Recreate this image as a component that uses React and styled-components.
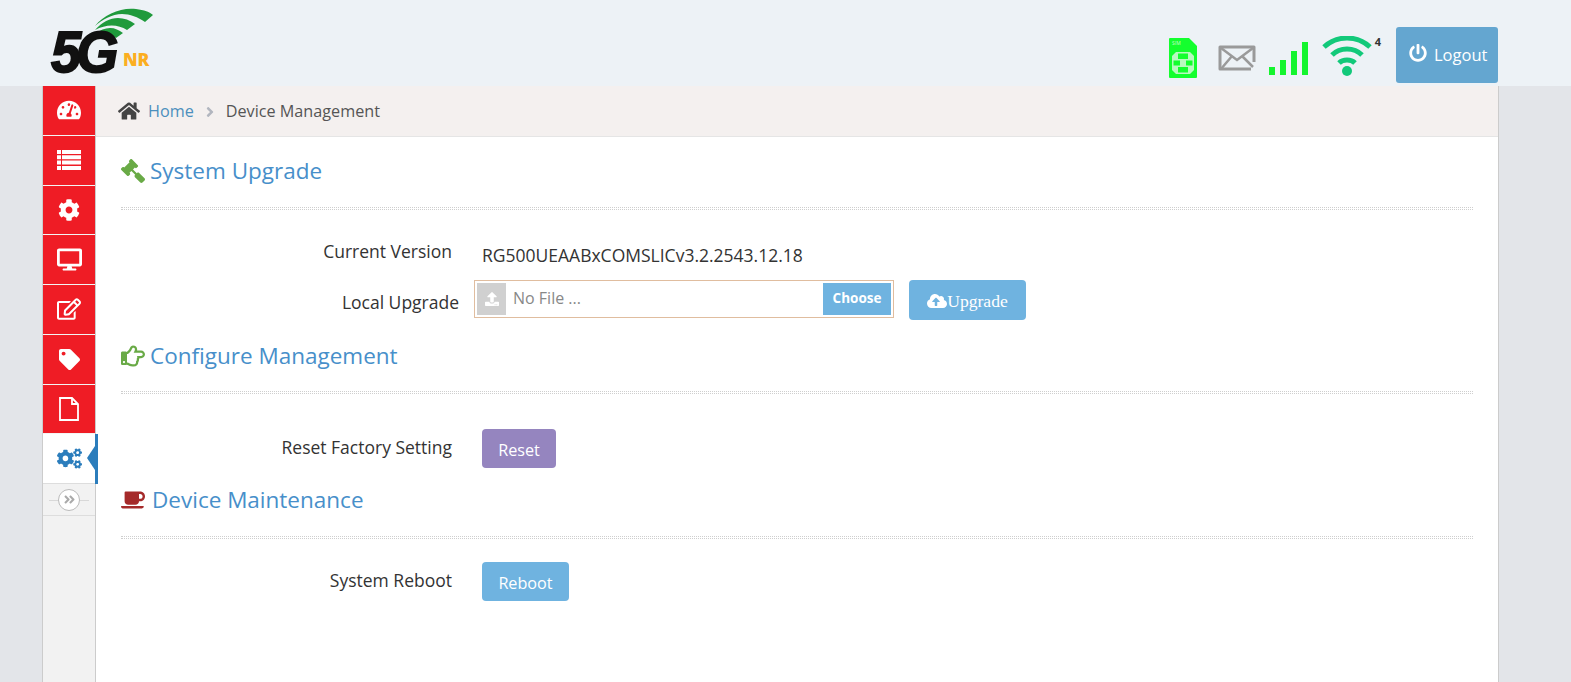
import React from "react";
import styled, { createGlobalStyle } from "styled-components";
import {
  FaTachometerAlt,
  FaCog,
  FaDesktop,
  FaRegEdit,
  FaTag,
  FaCogs,
  FaHome,
  FaGavel,
  FaRegHandPointRight,
  FaCoffee,
  FaPowerOff,
  FaCloudUploadAlt,
  FaUpload,
  FaAngleRight,
  FaAngleDoubleRight,
} from "react-icons/fa";

const GlobalStyle = createGlobalStyle`
  html, body {
    margin: 0;
    height: 100%;
    overflow: hidden;
    background: #e3e5e9;
    font-family: "Open Sans", sans-serif;
    color: #393939;
  }
  * { box-sizing: border-box; }
`;

const Page = styled.div`
  height: 682px;
  display: flex;
  flex-direction: column;
`;

const Header = styled.header`
  height: 86px;
  flex: none;
  background: #edf2f6;
  display: flex;
  justify-content: space-between;
  padding: 8px 73px 3px 50px;
`;

const Logo = styled.div`
  position: relative;
  width: 106px;
  height: 64px;
`;
const LogoArcs = styled.svg`
  position: absolute;
  left: 42px;
  top: 0;
`;
const LogoFive = styled.span`
  position: absolute;
  left: 1px;
  top: 16px;
  font: italic 900 57px/56px "Liberation Sans", sans-serif;
  -webkit-text-stroke: 1.8px #111;
  letter-spacing: -5px;
  color: #111;
  transform: scaleX(0.95);
  transform-origin: left center;
`;
const LogoNr = styled.span`
  position: absolute;
  left: 73px;
  top: 42px;
  font: 800 17.5px/19px "Open Sans", sans-serif;
  color: #fbae21;
`;

const StatusArea = styled.div`
  display: flex;
  align-items: flex-end;
`;
const StatusIcon = styled.svg`
  display: block;
  margin-right: ${(p) => p.$gap || 0}px;
  margin-bottom: ${(p) => p.$lift || 0}px;
`;
const WifiWrap = styled.div`
  position: relative;
  margin-right: 24px;
  margin-bottom: 7px;
`;
const WifiCount = styled.span`
  position: absolute;
  right: -9px;
  top: -1px;
  font-size: 11px;
  line-height: 14px;
  font-weight: 700;
  color: #333;
`;
const LogoutButton = styled.button`
  width: 102px;
  height: 56px;
  border: 0;
  border-radius: 3px;
  background: #64a6d0;
  color: #fff;
  font: 16.5px "Open Sans", sans-serif;
  display: flex;
  align-items: center;
  gap: 7px;
  padding: 0 0 2px 13px;
  svg { font-size: 18px; margin-top: -2px; }
`;

const Body = styled.div`
  flex: 1;
  min-height: 0;
  margin: 0 72px 0 42px;
  display: flex;
`;

const Sidebar = styled.nav`
  width: 54px;
  flex: none;
  background: #f2f2f2;
  border-left: 1px solid #cccccc;
  border-right: 1px solid #cccccc;
  position: relative;
`;
const SideItem = styled.div`
  height: 49.75px;
  display: flex;
  align-items: center;
  justify-content: center;
  background: ${(p) => (p.$active ? "#fff" : "#ef1c25")};
  color: ${(p) => (p.$active ? "#2b7dbc" : "#fff")};
  border-bottom: 1px solid ${(p) => (p.$active ? "#dddddd" : "#f4f4f4")};
  position: relative;
  svg { font-size: ${(p) => p.$size || 24}px; }
`;
const ActiveBar = styled.span`
  position: absolute;
  right: -3px;
  top: 0;
  bottom: -1px;
  width: 3px;
  background: #2b7dbc;
`;
const ActiveCaret = styled.span`
  position: absolute;
  right: 0;
  top: 12px;
  border-style: solid;
  border-width: 12px 8px 12px 0;
  border-color: transparent #2b7dbc transparent transparent;
`;
const Collapse = styled.div`
  height: 32px;
  border-bottom: 1px solid #dddddd;
  display: flex;
  align-items: center;
  justify-content: center;
  position: relative;
  &::before {
    content: "";
    position: absolute;
    left: 6px;
    right: 6px;
    top: 50%;
    border-top: 1px solid #d8d8d8;
  }
`;
const CollapseKnob = styled.span`
  position: relative;
  width: 22px;
  height: 22px;
  border-radius: 50%;
  border: 1px solid #bbbbbb;
  background: #fff;
  color: #aaaaaa;
  display: flex;
  align-items: center;
  justify-content: center;
  font-size: 13px;
`;

const Main = styled.main`
  flex: 1;
  background: #fff;
  border-right: 1px solid #cccccc;
  min-width: 0;
`;
const Breadcrumbs = styled.div`
  height: 51px;
  background: #f4f0ef;
  border-bottom: 1px solid #e5e5e5;
  display: flex;
  align-items: center;
  padding: 0 0 0 22px;
  font-size: 16.2px;
  color: #555;
`;
const HomeIcon = styled(FaHome)`
  font-size: 22px;
  color: #444;
  margin-right: 8px;
`;
const CrumbLink = styled.a`
  color: #4c8fbd;
`;
const CrumbSep = styled(FaAngleRight)`
  color: #b2b6bf;
  font-size: 16px;
  margin: 2px 8px 0 8px;
`;

const Content = styled.div`
  padding: 0 25px;
`;
const SectionTitle = styled.h2`
  margin: 0;
  height: 34px;
  display: flex;
  align-items: center;
  font-size: 22.5px;
  line-height: 34px;
  font-weight: 400;
  color: #478fca;
  margin-top: ${(p) => p.$top || 0}px;
  svg {
    color: ${(p) => p.$iconColor};
    font-size: 24px;
    margin-right: ${(p) => p.$iconGap || 5}px;
  }
`;
const FlippedGavel = styled(FaGavel)`
  transform: scaleX(-1);
`;
const Divider = styled.hr`
  margin: ${(p) => p.$above || 19}px 0 0;
  height: 3px;
  border: 0;
  border-top: 1px dotted #cfcfcf;
  border-bottom: 1px dotted #cfcfcf;
`;
const FormRow = styled.div`
  display: flex;
  align-items: flex-start;
  margin-top: ${(p) => p.$top || 0}px;
`;
const Label = styled.label`
  width: ${(p) => p.$width || 331}px;
  text-align: right;
  font-size: 17.5px;
  line-height: 22px;
  color: #333;
  flex: none;
  margin-top: ${(p) => p.$drop || 0}px;
`;
const Value = styled.span`
  margin: 4px 0 0 30px;
  font-size: 17.5px;
  line-height: 22px;
  color: #333;
`;
const FileBox = styled.div`
  width: 420px;
  height: 38px;
  margin-left: 15px;
  border: 1px solid #e0bd9f;
  padding: 2px;
  display: flex;
  align-items: stretch;
`;
const FileIcon = styled.span`
  width: 29px;
  background: #d0d0d0;
  color: #fff;
  display: flex;
  align-items: center;
  justify-content: center;
  font-size: 14px;
`;
const FileName = styled.span`
  flex: 1;
  padding-left: 7px;
  font-size: 16px;
  line-height: 31px;
  color: #888;
`;
const FileChoose = styled.span`
  width: 68px;
  background: #6fb3e0;
  color: #fff;
  font-size: 13.5px;
  font-weight: 700;
  text-align: center;
  line-height: 30px;
`;
const Button = styled.button`
  height: ${(p) => p.$height || 39}px;
  width: ${(p) => p.$width}px;
  margin-left: ${(p) => p.$left || 30}px;
  border: 0;
  border-radius: 4px;
  background: ${(p) => p.$bg || "#6fb3e0"};
  color: #fff;
  font: ${(p) => (p.$serif ? '17.6px "Liberation Serif", serif' : '16.2px "Open Sans", sans-serif')};
  padding: 2px 0 0;
  display: flex;
  align-items: center;
  justify-content: center;
  svg { font-size: 20px; }
`;

function ListIcon() {
  return (
    <svg width="24" height="20" viewBox="0 0 24 20" fill="currentColor">
      <path d="M0 0H4V4H0ZM5 0H24V4H5ZM0 5.3H4V9.3H0ZM5 5.3H24V9.3H5ZM0 10.6H4V14.6H0ZM5 10.6H24V14.6H5ZM0 16H4V20H0ZM5 16H24V20H5Z" />
    </svg>
  );
}

function FileOutlineIcon() {
  return (
    <svg width="20" height="24" viewBox="0 0 20 24" fill="none" stroke="currentColor" strokeWidth="1.8">
      <path d="M1 1H13L19 7V23H1Z" />
      <path d="M13 1V7H19" />
    </svg>
  );
}

const menu = [
  { icon: FaTachometerAlt },
  { icon: ListIcon },
  { icon: FaCog, size: 22 },
  { icon: FaDesktop, size: 25 },
  { icon: FaRegEdit },
  { icon: FaTag, size: 21 },
  { icon: FileOutlineIcon },
  { icon: FaCogs, size: 25, active: true },
];

export default function App() {
  return (
    <Page>
      <GlobalStyle />
      <Header>
        <Logo>
          <LogoArcs width="64" height="34" viewBox="0 0 64 34" fill="#1f9a3c">
            <path d="M3 18C12 6 30 -1 44 1C52 2 58 4 61 7L53 14C46 9 38 6 30 6C20 6 10 12 3 18Z" />
            <path d="M3 22C10 14 18 10 26 10C32 10 38 12 43 16L35 22C26 16 14 16 3 22Z" />
            <path d="M3 26C8 22 13 20 18 20C23 20 27 22 31 25L24 30C18 25 10 24 3 26Z" />
          </LogoArcs>
          <LogoFive>5G</LogoFive>
          <LogoNr>NR</LogoNr>
        </Logo>
        <StatusArea>
          <StatusIcon $gap={21} $lift={5} width="28" height="40" viewBox="0 0 28 40">
            <path d="M1 0H20L28 8V39a1 1 0 0 1-1 1H1a1 1 0 0 1-1-1V1a1 1 0 0 1 1-1Z" fill="#14ff2e" />
            <text x="3" y="7" fontSize="5" fontFamily="Open Sans" fill="#c8fbcc">SIM</text>
            <path d="M7 14H21L25 18V32L21 36H7L3 32V18Z" fill="#b9f9bf" />
            <path d="M9 15.5H19V21H9ZM9 29H19V34.5H9ZM4.5 22.5H11V27.5H4.5ZM17 22.5H23.5V27.5H17Z" fill="#14ff2e" />
          </StatusIcon>
          <StatusIcon $gap={13} $lift={12} width="38" height="26" viewBox="0 0 38 26">
            <path d="M36 17V2H2V24H33" fill="none" stroke="#9a9a9a" strokeWidth="3" strokeLinejoin="round" />
            <path d="M3 3L19 15L35 3M3 24L14 11M35 22L24 11" fill="none" stroke="#9a9a9a" strokeWidth="2.5" />
          </StatusIcon>
          <StatusIcon $gap={13} $lift={8} width="40" height="33" viewBox="0 0 40 33">
            <path d="M0 25H6V33H0ZM11 18H17V33H11ZM22 9H28V33H22ZM33 0H39V33H33Z" fill="#14f52e" />
          </StatusIcon>
          <WifiWrap>
            <StatusIcon width="50" height="40" viewBox="0 0 50 40">
              <path d="M2 11C15 -1 35 -1 48 11" fill="none" stroke="#12c97a" strokeWidth="5" />
              <path d="M10 19C18 11 32 11 40 19" fill="none" stroke="#12c97a" strokeWidth="5" />
              <path d="M17 27C21 23 29 23 33 27" fill="none" stroke="#12c97a" strokeWidth="5" />
              <circle cx="25" cy="35" r="5" fill="#12c97a" />
            </StatusIcon>
            <WifiCount>4</WifiCount>
          </WifiWrap>
          <LogoutButton>
            <FaPowerOff />
            Logout
          </LogoutButton>
        </StatusArea>
      </Header>
      <Body>
        <Sidebar>
          {menu.map((m, i) => (
            <SideItem key={i} $active={m.active} $size={m.size}>
              <m.icon />
              {m.active && <ActiveCaret />}
              {m.active && <ActiveBar />}
            </SideItem>
          ))}
          <Collapse>
            <CollapseKnob>
              <FaAngleDoubleRight />
            </CollapseKnob>
          </Collapse>
        </Sidebar>
        <Main>
          <Breadcrumbs>
            <HomeIcon />
            <CrumbLink>Home</CrumbLink>
            <CrumbSep />
            Device Management
          </Breadcrumbs>
          <Content>
            <SectionTitle $top={17} $iconColor="#69aa46">
              <FlippedGavel />
              System Upgrade
            </SectionTitle>
            <Divider />
            <FormRow $top={30}>
              <Label>Current Version</Label>
              <Value>RG500UEAABxCOMSLICv3.2.2543.12.18</Value>
            </FormRow>
            <FormRow $top={14}>
              <Label $width={338} $drop={11}>Local Upgrade</Label>
              <FileBox>
                <FileIcon>
                  <FaUpload />
                </FileIcon>
                <FileName>No File ...</FileName>
                <FileChoose>Choose</FileChoose>
              </FileBox>
              <Button $serif $width={117} $height={40} $left={15}>
                <FaCloudUploadAlt />
                Upgrade
              </Button>
            </FormRow>
            <SectionTitle $top={19} $iconColor="#69aa46">
              <FaRegHandPointRight />
              Configure Management
            </SectionTitle>
            <Divider $above={18} />
            <FormRow $top={35}>
              <Label $drop={7}>Reset Factory Setting</Label>
              <Button $bg="#9585bf" $width={74}>Reset</Button>
            </FormRow>
            <SectionTitle $top={15} $iconColor="#a52a2a" $iconGap={7}>
              <FaCoffee />
              Device Maintenance
            </SectionTitle>
            <Divider />
            <FormRow $top={23}>
              <Label $drop={7}>System Reboot</Label>
              <Button $width={87}>Reboot</Button>
            </FormRow>
          </Content>
        </Main>
      </Body>
    </Page>
  );
}
